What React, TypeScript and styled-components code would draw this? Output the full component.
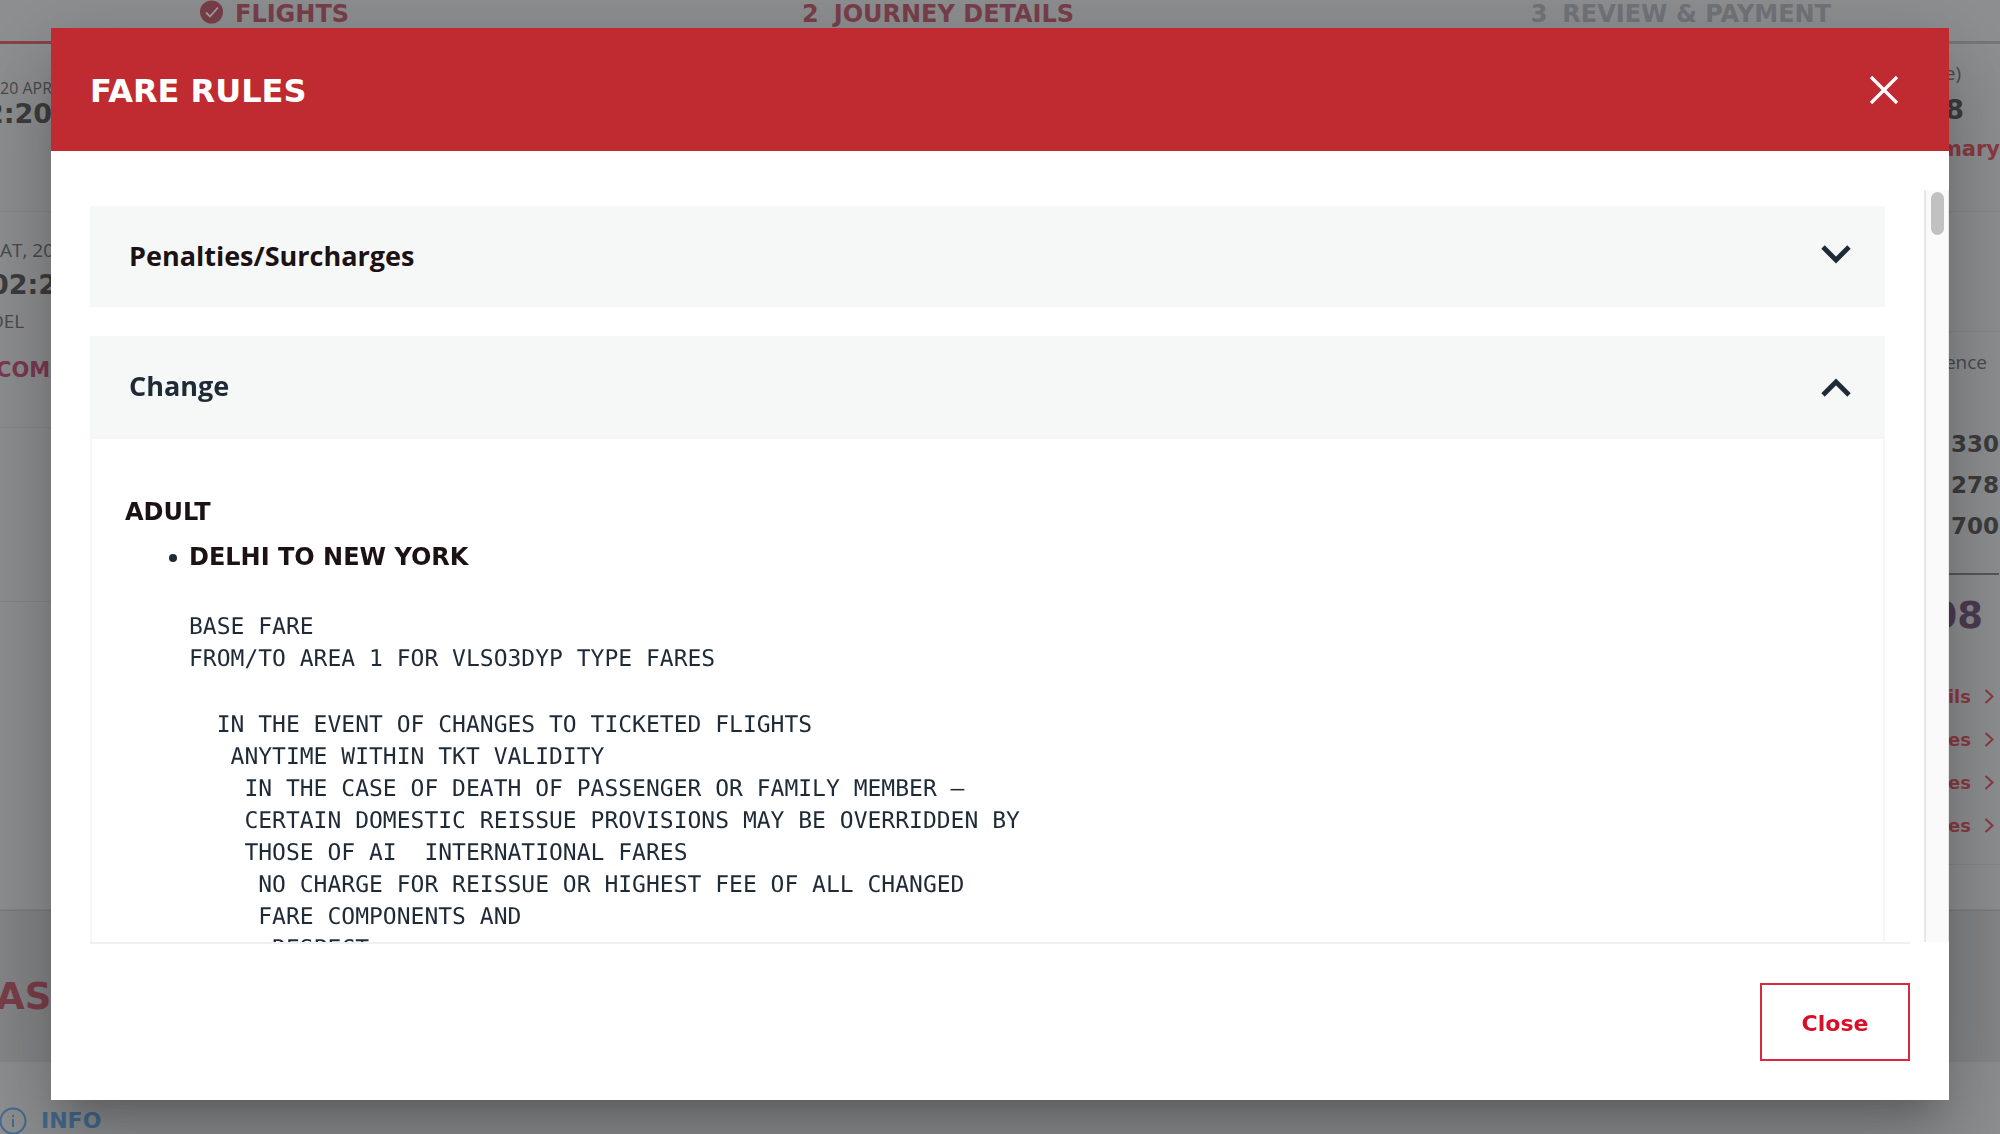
import React, { useState } from "react";
import styled, { createGlobalStyle, css } from "styled-components";

const display = `"DejaVu Sans", Verdana, sans-serif`;
const body = `"Open Sans", "Noto Sans", sans-serif`;
const mono = `"DejaVu Sans Mono", Menlo, monospace`;

const GlobalStyle = createGlobalStyle`
  *, *::before, *::after { box-sizing: border-box; }
  body { margin: 0; background: #8f9092; font-family: ${body}; }
  h1, h2, h3, h4, p, ul, pre { margin: 0; padding: 0; }
  button { font-family: inherit; cursor: pointer; }
`;

/* ---------- page behind the dialog ---------- */

const Page = styled.div`
  display: flex;
  flex-direction: column;
  height: 100vh;
  overflow: hidden;
  white-space: nowrap;
  background: #8f9092;
  color: #3d3d3e;
`;

const Stepper = styled.nav`
  display: grid;
  grid-template-columns: 40% 1fr auto;
  flex: none;
  height: 44px;
`;

const Step = styled.div<{ $state: "done" | "next"; $left?: number; $right?: number }>`
  display: flex;
  align-items: flex-start;
  gap: 15px;
  padding-left: ${(p) => p.$left ?? 0}px;
  padding-right: ${(p) => p.$right ?? 0}px;
  border-bottom: 3px solid ${(p) => (p.$state === "done" ? "#884449" : "#77787a")};
  color: ${(p) => (p.$state === "done" ? "#7a3f4b" : "#727579")};
  font: 700 24px/28px ${display};
  svg { margin-right: -3px; }
`;

const Columns = styled.div`
  display: flex;
  justify-content: space-between;
  flex: none;
  height: 866px;
`;

const Column = styled.div<{ $right?: boolean }>`
  display: flex;
  flex-direction: column;
  width: 120px;
  align-items: stretch;
  text-align: ${(p) => (p.$right ? "right" : "left")};
`;

const Cell = styled.section<{ $h: number; $top?: number }>`
  flex: none;
  height: ${(p) => p.$h}px;
  padding-top: ${(p) => p.$top ?? 0}px;
  border-bottom: 1px solid #868789;
`;

const Small = styled.p<{ $size: number; $pull?: number; $right?: number; $gap?: number }>`
  margin-top: ${(p) => p.$gap ?? 0}px;
  margin-left: ${(p) => -(p.$pull ?? 0)}px;
  padding-right: ${(p) => p.$right ?? 0}px;
  font: 500 ${(p) => p.$size}px/24px ${body};
  color: #4a4b4c;
`;

const Strong = styled.p<{ $size: number; $line: number; $pull?: number; $right?: number; $color?: string; $gap?: number }>`
  margin-top: ${(p) => p.$gap ?? 0}px;
  margin-left: ${(p) => -(p.$pull ?? 0)}px;
  padding-right: ${(p) => p.$right ?? 0}px;
  font: 700 ${(p) => p.$size}px/${(p) => p.$line}px ${display};
  color: ${(p) => p.$color ?? "#3d3d3e"};
`;

const TotalRule = styled.hr`
  height: 2px;
  margin: 26px 1px 22px 0;
  border: 0;
  background: #57585a;
`;

const SideLinks = styled.ul`
  display: flex;
  flex-direction: column;
  padding-top: 40px;
  list-style: none;
`;

const SideLink = styled.a`
  display: flex;
  justify-content: flex-end;
  align-items: center;
  gap: 13px;
  height: 43px;
  padding-right: 6px;
  color: #8a3b44;
  font: 700 18px/24px ${display};
  text-decoration: none;
`;

const Band = styled.div`
  flex: none;
  display: flex;
  align-items: center;
  height: 152px;
  padding-top: 20px;
  border-top: 1px solid #7b7c7d;
  background: #868788;
`;

const InfoRow = styled.div`
  display: flex;
  align-items: center;
  gap: 14px;
  padding-top: 45px;
  color: #446b91;
  font: 700 22px/28px ${display};
  svg { margin-left: -1px; }
`;

/* ---------- dialog ---------- */

const Backdrop = styled.div`
  position: fixed;
  inset: 0;
  display: flex;
  padding: 28px 51px 34px;
`;

const Dialog = styled.div`
  flex: 1;
  display: flex;
  flex-direction: column;
  min-width: 0;
  background: #fff;
  box-shadow: 0 22px 30px -14px rgba(0, 0, 0, 0.2), 0 48px 76px 6px rgba(0, 0, 0, 0.14),
    0 18px 92px 16px rgba(0, 0, 0, 0.12);
`;

const DialogHeader = styled.header`
  display: flex;
  align-items: center;
  justify-content: space-between;
  flex: none;
  height: 123px;
  padding: 0 39px;
  background: #c02b31;
  color: #fff;
`;

const Title = styled.h1`
  padding-top: 2px;
  font: 700 32px/40px ${display};
`;

const IconButton = styled.button`
  display: flex;
  padding: 10px;
  border: 0;
  background: none;
  color: inherit;
`;

const ScrollRow = styled.div`
  display: flex;
  flex: 1;
  min-height: 0;
  margin-top: 39px;
`;

const ScrollArea = styled.div`
  flex: 1;
  min-width: 0;
  padding: 16px 39px 0;
  overflow-y: auto;
  scrollbar-width: none;
`;

const Track = styled.div`
  flex: none;
  width: 25px;
  padding: 2px 5px 0;
  border: solid #e6e6e6;
  border-width: 0 1px 0 2px;
  background: #fafafa;
`;

const Thumb = styled.div`
  width: 13px;
  height: 43px;
  border-radius: 7px;
  background: #c1c1c1;
`;

const Item = styled.section`
  margin-bottom: 29px;
`;

const ItemButton = styled.button<{ $open: boolean }>`
  display: flex;
  align-items: center;
  justify-content: space-between;
  width: 100%;
  height: 101px;
  padding: 0 34px 2px 39px;
  border: 0;
  background: #f6f8f8;
  color: ${(p) => (p.$open ? "#1f2a37" : "#1c1113")};
  font: 700 27px/36px ${body};
`;

const chevronFlip = css`
  transform: rotate(180deg);
`;

const Chevron = styled.svg<{ $up: boolean }>`
  color: #1f2a37;
  ${(p) => p.$up && chevronFlip}
`;

const Panel = styled.div`
  padding: 51px 33px 40px;
  border: 2px solid #f4f6fa;
`;

const RuleHeading = styled.h3`
  color: #1c1113;
  font: 700 24px/45px ${display};
`;

const RouteList = styled.ul`
  padding-left: 64px;
  list-style: none;
`;

const RouteTitle = styled(RuleHeading).attrs({ as: "h4" })`
  display: flex;
  align-items: center;
  margin-left: -20px;
  gap: 12px;
  &::before {
    content: "";
    width: 8px;
    height: 8px;
    border-radius: 50%;
    background: #1f2a37;
  }
`;

const FareText = styled.pre<{ $gap: number }>`
  margin-top: ${(p) => p.$gap}px;
  color: #1f2a37;
  font: 400 23px/32px ${mono};
  text-rendering: geometricPrecision;
`;

const DialogFooter = styled.footer`
  display: flex;
  justify-content: flex-end;
  flex: none;
  margin: 0 39px;
  padding: 39px 0;
  border-top: 2px solid #f0f0f2;
`;

const CloseButton = styled.button`
  width: 150px;
  height: 78px;
  padding-top: 4px;
  border: 2px solid #dc2740;
  background: #fff;
  color: #da0e29;
  font: 700 22px/28px ${display};
`;

const opening = `BASE FARE
FROM/TO AREA 1 FOR VLSO3DYP TYPE FARES`;

const rules = `  IN THE EVENT OF CHANGES TO TICKETED FLIGHTS
   ANYTIME WITHIN TKT VALIDITY
    IN THE CASE OF DEATH OF PASSENGER OR FAMILY MEMBER –
    CERTAIN DOMESTIC REISSUE PROVISIONS MAY BE OVERRIDDEN BY
    THOSE OF AI  INTERNATIONAL FARES
     NO CHARGE FOR REISSUE OR HIGHEST FEE OF ALL CHANGED
     FARE COMPONENTS AND
      RESPECT`;

type AccordionProps = { title: string; open: boolean; onToggle: () => void; children?: React.ReactNode };

function Accordion({ title, open, onToggle, children }: AccordionProps) {
  return (
    <Item>
      <ItemButton type="button" $open={open} aria-expanded={open} onClick={onToggle}>
        {title}
        <Chevron $up={open} width="30" height="22" viewBox="0 0 30 22" aria-hidden="true">
          <path d="M2 2 L15 15 L28 2" fill="none" stroke="currentColor" strokeWidth="4.8" />
        </Chevron>
      </ItemButton>
      {open && children && <Panel>{children}</Panel>}
    </Item>
  );
}

function BookingPage() {
  return (
    <Page>
      <Stepper aria-label="Booking steps">
        <Step $state="done" $left={200}>
          <svg width="23" height="24" viewBox="0 0 23 24" aria-hidden="true">
            <circle cx="11.5" cy="12" r="11.5" fill="#7a3f4b" />
            <path d="M6 12.5 L10 16.5 L18 7.5" fill="none" stroke="#a3a0a2" strokeWidth="1.8" />
          </svg>
          <span>FLIGHTS</span>
        </Step>
        <Step $state="done" $left={2}>
          <span>2</span>
          <span>JOURNEY DETAILS</span>
        </Step>
        <Step $state="next" $right={169}>
          <span>3</span>
          <span>REVIEW &amp; PAYMENT</span>
        </Step>
      </Stepper>
      <Columns>
        <Column>
          <Cell $h={168} $top={32}>
            <Small $size={16}>20 APR</Small>
            <Strong $size={27} $line={28} $pull={15}>2:20</Strong>
          </Cell>
          <Cell $h={216} $top={26}>
            <Small $size={19}>AT, 20</Small>
            <Strong $size={27} $line={28} $pull={10} $gap={9}>02:2</Strong>
            <Small $size={19} $pull={10} $gap={10}>DEL</Small>
            <Strong $size={21} $line={24} $pull={4} $gap={25} $color="#7c3a52">COM</Strong>
          </Cell>
          <Cell $h={174} />
          <Cell $h={308} />
        </Column>
        <Column $right>
          <Cell $h={168} $top={17}>
            <Small $size={19} $right={39}>e)</Small>
            <Strong $size={27} $line={28} $right={36} $gap={11}>8</Strong>
            <Strong $size={21} $line={26} $gap={12} $color="#8a3b44">mary</Strong>
          </Cell>
          <Cell $h={120} />
          <Cell $h={533} $top={18}>
            <Small $size={19} $right={13}>ence</Small>
            <Strong $size={23} $line={41} $right={1} $gap={50}>330</Strong>
            <Strong $size={23} $line={41} $right={1}>278</Strong>
            <Strong $size={23} $line={41} $right={1}>700</Strong>
            <TotalRule />
            <Strong $size={37} $line={38} $right={17} $color="#4e3c52">08</Strong>
            <SideLinks>
              {["ils", "es", "es", "es"].map((label, i) => (
                <li key={i}>
                  <SideLink href="#">
                    {label}
                    <svg width="10" height="15" viewBox="0 0 10 15" aria-hidden="true">
                      <path d="M1.5 1 L8.5 7.5 L1.5 14" fill="none" stroke="currentColor" strokeWidth="2" />
                    </svg>
                  </SideLink>
                </li>
              ))}
            </SideLinks>
          </Cell>
          <Cell $h={45} />
        </Column>
      </Columns>
      <Band>
        <Strong $size={37} $line={44} $pull={4} $color="#7c3f4a">AS</Strong>
      </Band>
      <InfoRow>
        <svg width="28" height="28" viewBox="0 0 28 28" aria-hidden="true">
          <circle cx="14" cy="14" r="12.5" fill="none" stroke="currentColor" strokeWidth="2" />
          <path d="M14 12 V20 M14 8 V10" stroke="currentColor" strokeWidth="2" />
        </svg>
        INFO
      </InfoRow>
    </Page>
  );
}

export default function App() {
  const [open, setOpen] = useState<string>("change");
  const toggle = (id: string) => setOpen(open === id ? "" : id);

  return (
    <>
      <GlobalStyle />
      <BookingPage />
      <Backdrop>
        <Dialog role="dialog" aria-modal="true" aria-labelledby="fare-rules">
          <DialogHeader>
            <Title id="fare-rules">FARE RULES</Title>
            <IconButton type="button" aria-label="Close fare rules">
              <svg width="32" height="32" viewBox="0 0 32 32" aria-hidden="true">
                <path d="M3 3 L29 29 M29 3 L3 29" stroke="currentColor" strokeWidth="3.2" />
              </svg>
            </IconButton>
          </DialogHeader>
          <ScrollRow>
            <ScrollArea>
              <Accordion title="Penalties/Surcharges" open={open === "penalties"} onToggle={() => toggle("penalties")} />
              <Accordion title="Change" open={open === "change"} onToggle={() => toggle("change")}>
                <RuleHeading>ADULT</RuleHeading>
                <RouteList>
                  <li>
                    <RouteTitle>DELHI TO NEW YORK</RouteTitle>
                    <FareText $gap={31}>{opening}</FareText>
                    <FareText $gap={34}>{rules}</FareText>
                  </li>
                </RouteList>
              </Accordion>
            </ScrollArea>
            <Track aria-hidden="true">
              <Thumb />
            </Track>
          </ScrollRow>
          <DialogFooter>
            <CloseButton type="button">Close</CloseButton>
          </DialogFooter>
        </Dialog>
      </Backdrop>
    </>
  );
}
